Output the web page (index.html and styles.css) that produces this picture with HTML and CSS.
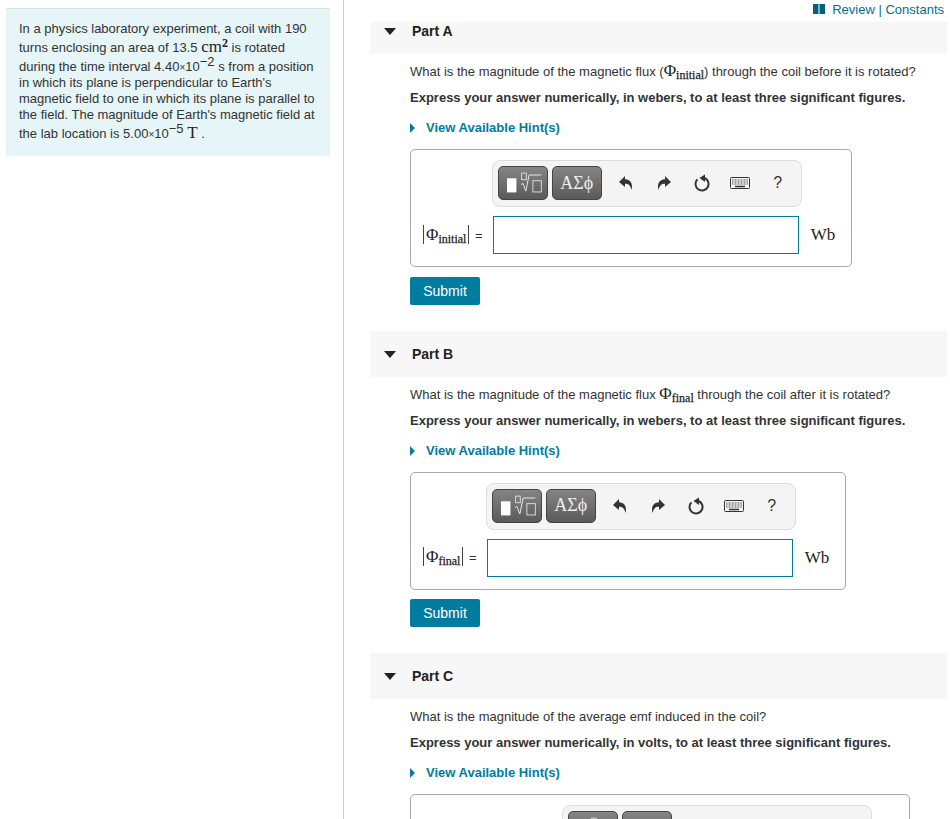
FILE: index.html
```html
<!DOCTYPE html>
<html lang="en">
<head>
  <meta charset="UTF-8">
  <meta name="viewport" content="width=device-width, initial-scale=1.0">
  <title>Physics Problem</title>
  <link rel="stylesheet" href="styles.css">
</head>
<body>

  <!-- Icons used by every toolbar -->
  <svg class="icon-defs" aria-hidden="true">
    <symbol id="iconTemplate" viewBox="0 0 50 34">
      <rect x="8" y="12" width="10" height="15" fill="#fff"/>
      <rect x="23.500" y="6.500" width="5" height="7" fill="none" stroke="#ddd"/>
      <path d="M23 18.500l2 -1l3 8l3.500 -17h13" fill="none" stroke="#eee" stroke-width="1"/>
      <rect x="35.500" y="14.500" width="9" height="12" fill="none" stroke="#ddd"/>
    </symbol>
    <symbol id="iconUndo" viewBox="0 0 14 14">
      <path d="M6 0L0 6l6 5V7.800c3 0 5 .7 6.500 6.200c1.500-6-.5-10.500-6.500-10.800z" fill="#333"/>
    </symbol>
    <symbol id="iconRedo" viewBox="0 0 14 14">
      <path d="M8 0L14 6l-6 5V7.800c-3 0-5 .7-6.500 6.200c-1.500-6 .5-10.500 6.500-10.800z" fill="#333"/>
    </symbol>
    <symbol id="iconReset" viewBox="0 0 16 18">
      <path d="M3.400 5.400a6.500 6.500 0 1 0 6.600 -1.600" fill="none" stroke="#333" stroke-width="2"/>
      <path d="M11 0.500V8L5.500 4z" fill="#333"/>
    </symbol>
    <symbol id="iconKeyboard" viewBox="0 0 20 12">
      <rect x="0.500" y="0.500" width="19" height="11" rx="1" fill="#f4f4f4" stroke="#333"/>
      <path d="M2 3h16M2 5h16M2 7h16" stroke="#555" stroke-width="1" stroke-dasharray="1 0.500"/>
      <path d="M5 9.500h10" stroke="#333" stroke-width="1.500"/>
    </symbol>
  </svg>

  <div class="container">
    <!-- Problem statement -->
    <div class="sidebar">
      <div class="intro">
        In a physics laboratory experiment, a coil with 190 turns enclosing an area of 13.5
        <span class="math">cm<sup>2</sup></span> is rotated during the time interval
        4.40<span class="times">×</span>10<sup class="exp">−2</sup> s from a position in which its plane is perpendicular to
        Earth's magnetic field to one in which its plane is parallel to the field. The magnitude of
        Earth's magnetic field at the lab location is 5.00<span class="times">×</span>10<sup class="exp">−5</sup>
        <span class="math">T</span> .
      </div>
    </div>

    <!-- Main Content -->
    <div class="main-content">
      <div class="top-links">
        <svg class="book" viewBox="0 0 12 10" aria-hidden="true">
          <path d="M0 0h5.500v10H0zM6.500 0H12v10H6.500z" fill="#00627f"/>
        </svg>
        <span>Review | Constants</span>
      </div>

      <!-- Part A -->
      <div class="part-head part-head-first"><span class="caret"></span>Part A</div>
      <div class="part-body">
        <p>What is the magnitude of the magnetic flux (<span class="math">Φ<sub>initial</sub></span>) through the coil before it is rotated?</p>
        <p class="strong">Express your answer numerically, in webers, to at least three significant figures.</p>
        <p class="hint"><span class="hint-caret"></span>View Available Hint(s)</p>
        <div class="answer-box">
          <div class="toolbar">
            <button class="tool-btn"><svg viewBox="0 0 50 34"><use href="#iconTemplate"/></svg></button>
            <button class="tool-btn">ΑΣϕ</button>
            <span class="tool tool-first"><svg class="ic-arrow"><use href="#iconUndo"/></svg></span>
            <span class="tool"><svg class="ic-arrow"><use href="#iconRedo"/></svg></span>
            <span class="tool"><svg class="ic-reset"><use href="#iconReset"/></svg></span>
            <span class="tool"><svg class="ic-keys"><use href="#iconKeyboard"/></svg></span>
            <span class="tool tool-help">?</span>
          </div>
          <label class="answer-label"><span class="math abs">Φ<sub>initial</sub></span> =</label>
          <input class="answer-input" type="text">
          <span class="math unit">Wb</span>
        </div>
        <button class="submit">Submit</button>
      </div>

      <!-- Part B -->
      <div class="part-head"><span class="caret"></span>Part B</div>
      <div class="part-body">
        <p>What is the magnitude of the magnetic flux <span class="math">Φ<sub>final</sub></span> through the coil after it is rotated?</p>
        <p class="strong">Express your answer numerically, in webers, to at least three significant figures.</p>
        <p class="hint"><span class="hint-caret"></span>View Available Hint(s)</p>
        <div class="answer-box">
          <div class="toolbar">
            <button class="tool-btn"><svg viewBox="0 0 50 34"><use href="#iconTemplate"/></svg></button>
            <button class="tool-btn">ΑΣϕ</button>
            <span class="tool tool-first"><svg class="ic-arrow"><use href="#iconUndo"/></svg></span>
            <span class="tool"><svg class="ic-arrow"><use href="#iconRedo"/></svg></span>
            <span class="tool"><svg class="ic-reset"><use href="#iconReset"/></svg></span>
            <span class="tool"><svg class="ic-keys"><use href="#iconKeyboard"/></svg></span>
            <span class="tool tool-help">?</span>
          </div>
          <label class="answer-label"><span class="math abs">Φ<sub>final</sub></span> =</label>
          <input class="answer-input" type="text">
          <span class="math unit">Wb</span>
        </div>
        <button class="submit">Submit</button>
      </div>

      <!-- Part C -->
      <div class="part-head"><span class="caret"></span>Part C</div>
      <div class="part-body">
        <p>What is the magnitude of the average emf induced in the coil?</p>
        <p class="strong">Express your answer numerically, in volts, to at least three significant figures.</p>
        <p class="hint"><span class="hint-caret"></span>View Available Hint(s)</p>
        <div class="answer-box">
          <div class="toolbar">
            <button class="tool-btn"><svg viewBox="0 0 50 34"><use href="#iconTemplate"/></svg></button>
            <button class="tool-btn">ΑΣϕ</button>
            <span class="tool tool-first"><svg class="ic-arrow"><use href="#iconUndo"/></svg></span>
            <span class="tool"><svg class="ic-arrow"><use href="#iconRedo"/></svg></span>
            <span class="tool"><svg class="ic-reset"><use href="#iconReset"/></svg></span>
            <span class="tool"><svg class="ic-keys"><use href="#iconKeyboard"/></svg></span>
            <span class="tool tool-help">?</span>
          </div>
          <label class="answer-label answer-label-wide"><span class="math abs">average emf</span> =</label>
          <input class="answer-input" type="text">
          <span class="math unit">V</span>
        </div>
        <button class="submit">Submit</button>
      </div>
    </div>
  </div>

</body>
</html>
```

FILE: styles.css
```css
body {
  font-family: "Liberation Sans", Arial, sans-serif;
  font-size: 13px;
  color: #333;
  margin: 0;
  padding: 0;
  height: 100vh;
  overflow: hidden;
  background-color: white;
}
.icon-defs {
  display: none;
}
.container {
  display: flex;
  width: 100%;
  height: 100%;
}
.sidebar {
  width: 324px;
  flex-shrink: 0;
  padding: 8px 13px 0 6px;
  border-right: 1px solid #ccc;
}
.intro {
  background-color: #e5f5f8;
  border-top: 1px solid #d9e2e4;
  padding: 12px 13px 14px;
  line-height: 16px;
}
.math {
  font-family: "Liberation Serif", "Times New Roman", serif;
  font-size: 17px;
  line-height: 14px;
  color: #222;
}
.math sup {
  font-size: 12px;
  font-weight: bold;
  line-height: 12px;
  vertical-align: 5px;
}
.math sub {
  font-size: 12px;
  line-height: 0;
  vertical-align: -3px;
  -webkit-text-stroke: 0.25px #222;
}
.times {
  font-size: 10px;
  line-height: 10px;
}
.exp {
  font-size: 13px;
  line-height: 12px;
  vertical-align: 5px;
}
.main-content {
  flex-grow: 1;
  min-width: 0;
  padding-left: 26px;
  padding-right: 3px;
}
.top-links {
  height: 22px;
  display: flex;
  justify-content: flex-end;
  align-items: center;
  padding: 0 3px 4px 0;
  box-sizing: border-box;
  color: #00708f;
  gap: 7px;
}
.book {
  width: 12px;
  height: 10px;
}
.part-head {
  display: flex;
  align-items: flex-start;
  height: 46px;
  box-sizing: border-box;
  padding: 14px 0 0 14px;
  font-size: 14px;
  line-height: 18px;
  background-color: #f7f7f7;
  font-weight: bold;
  color: #222;
}
.part-head-first {
  height: 32px;
  padding-top: 0;
}
.caret {
  width: 0;
  height: 0;
  margin: 6px 16px 0 0;
  border-left: 6px solid transparent;
  border-right: 6px solid transparent;
  border-top: 7px solid #222;
}
.part-body {
  padding: 9px 0 26px 40px;
}
.part-body p {
  margin: 0 0 8px;
  line-height: 18px;
}
.strong {
  font-weight: bold;
}
.part-body .hint {
  display: flex;
  align-items: center;
  margin: 12px 0 12px;
  font-weight: bold;
  color: #007c9f;
}
.hint-caret {
  width: 0;
  height: 0;
  margin-right: 11px;
  border-top: 5px solid transparent;
  border-bottom: 5px solid transparent;
  border-left: 5px solid #007c9f;
}
.answer-box {
  display: grid;
  grid-template-columns: auto 306px auto;
  column-gap: 10px;
  row-gap: 9px;
  align-items: center;
  width: fit-content;
  padding: 10px 16px 12px 12px;
  margin-bottom: 9.5px;
  border: 1px solid #aaa;
  border-radius: 5px;
}
.toolbar {
  grid-column: 2;
  justify-self: center;
  display: flex;
  width: 310px;
  height: 47px;
  margin-left: 2px;
  padding: 5px;
  box-sizing: border-box;
  gap: 4px;
  background-color: #f4f4f4;
  border: 1px solid #ddd;
  border-radius: 8px;
}
.tool-btn {
  width: 50px;
  height: 34px;
  padding: 0;
  flex-shrink: 0;
  background: linear-gradient(#858585, #5a5a5a);
  border: 1px solid #444;
  border-radius: 5px;
  color: #eee;
  font-family: "Liberation Serif", serif;
  font-size: 18px;
}
.tool-btn svg {
  display: block;
  width: 48px;
  height: 32px;
}
.tool {
  width: 38px;
  height: 34px;
  margin-left: -4px;
  display: flex;
  align-items: center;
  justify-content: center;
  flex-shrink: 0;
}
.tool-first {
  margin-left: 1px;
}
.tool-help {
  font-size: 16px;
  color: #333;
}
.ic-arrow {
  width: 14px;
  height: 14px;
}
.ic-reset {
  width: 16px;
  height: 18px;
}
.ic-keys {
  width: 20px;
  height: 12px;
}
.answer-label {
  grid-column: 1;
  font-size: 13px;
  white-space: nowrap;
}
.answer-label-wide {
  min-width: 130px;
}
.abs {
  margin-right: 2px;
  padding: 0 2px;
  border-left: 1px solid #444;
  border-right: 1px solid #444;
}
.answer-input {
  width: 100%;
  height: 38px;
  box-sizing: border-box;
  border: 1px solid #007c9f;
  padding: 0 8px;
  margin: 0;
}
.unit {
  margin-left: 2px;
}
.submit {
  display: block;
  width: 70px;
  height: 28px;
  padding: 0;
  background-color: #007c9f;
  color: white;
  border: none;
  border-radius: 2px;
  font-family: inherit;
  font-size: 14px;
}
```
